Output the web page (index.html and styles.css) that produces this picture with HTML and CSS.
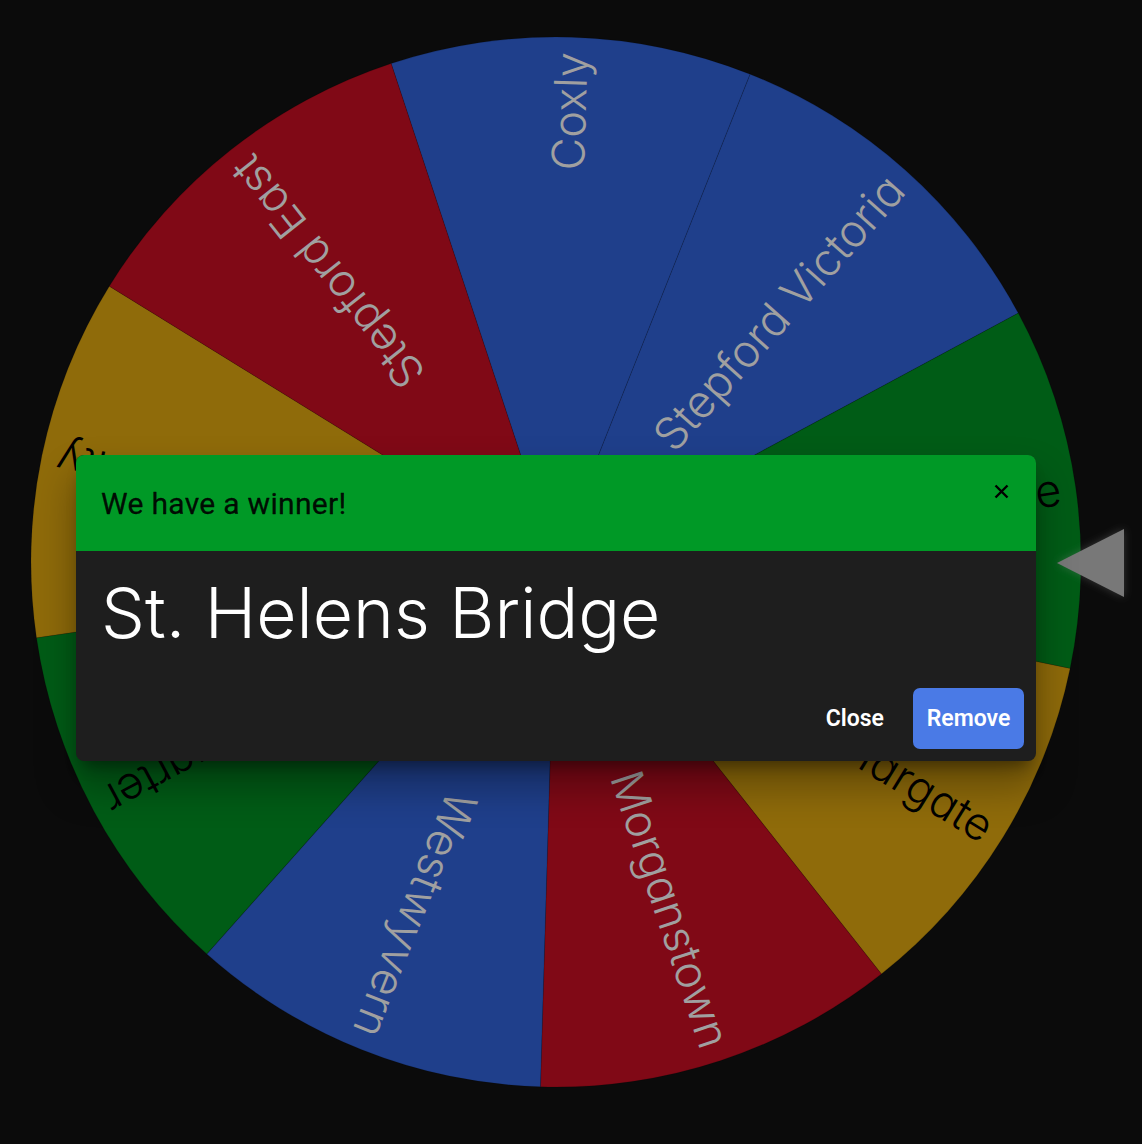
FILE: index.html
```html
<!DOCTYPE html>
<html lang="en">
<head>
<meta charset="utf-8">
<title>Wheel – winner</title>
<link rel="stylesheet" href="styles.css">
</head>
<body>
<div class="stage">
  <svg class="wheel" width="1142" height="1144" viewBox="0 0 1142 1144" xmlns="http://www.w3.org/2000/svg">
    <defs>
      <path id="wedge" d="M556 562 L1049.34 382.44 A525 525 0 0 1 1049.34 741.56 Z"/>
      <filter id="glow" x="-50%" y="-50%" width="200%" height="200%">
        <feDropShadow dx="0" dy="0" stdDeviation="4" flood-color="#8a8a8a" flood-opacity="0.35"/>
      </filter>
    </defs>
    <g class="segments">
      <use href="#wedge" class="seg blue" transform="rotate(271.7 556 562)"/>
      <use href="#wedge" class="seg blue" transform="rotate(311.7 556 562)"/>
      <use href="#wedge" class="seg green" transform="rotate(351.7 556 562)"/>
      <use href="#wedge" class="seg gold" transform="rotate(31.7 556 562)"/>
      <use href="#wedge" class="seg red" transform="rotate(71.7 556 562)"/>
      <use href="#wedge" class="seg blue" transform="rotate(111.7 556 562)"/>
      <use href="#wedge" class="seg green" transform="rotate(151.7 556 562)"/>
      <use href="#wedge" class="seg gold" transform="rotate(191.7 556 562)"/>
      <use href="#wedge" class="seg red" transform="rotate(231.7 556 562)"/>
    </g>
    <g class="labels">
      <text class="seg-text light" x="1066" y="562" transform="rotate(271.7 556 562)">Coxly</text>
      <text class="seg-text light" x="1066" y="562" transform="rotate(311.7 556 562)">Stepford Victoria</text>
      <text class="seg-text dark" x="1066" y="562" transform="rotate(351.7 556 562)">St. Helens Bridge</text>
      <text class="seg-text dark" x="1066" y="562" transform="rotate(31.7 556 562)">Hampton Hargate</text>
      <text class="seg-text light" x="1066" y="562" transform="rotate(71.7 556 562)">Morganstown</text>
      <text class="seg-text light" x="1066" y="562" transform="rotate(111.7 556 562)">Westwyvern</text>
      <text class="seg-text dark" x="1066" y="562" transform="rotate(151.7 556 562)">Financial Quarter</text>
      <text class="seg-text dark" x="1066" y="562" transform="rotate(191.7 556 562)">Leighton City</text>
      <text class="seg-text light" x="1066" y="562" transform="rotate(231.7 556 562)">Stepford East</text>
    </g>
    <polygon class="pointer" points="1057,563 1124,529 1124,597" filter="url(#glow)"/>
  </svg>

  <div class="dialog">
    <div class="dialog-header">
      <span class="dialog-title">We have a winner!</span>
      <button class="dialog-x" aria-label="Close">
        <svg width="15" height="15" viewBox="0 0 15 15"><path d="M1.5 1.5 L13.5 13.5 M13.5 1.5 L1.5 13.5" stroke="#000" stroke-width="2.4" fill="none"/></svg>
      </button>
    </div>
    <div class="dialog-body">
      <div class="winner">St. Helens Bridge</div>
    </div>
    <div class="dialog-actions">
      <button class="btn btn-text">Close</button>
      <button class="btn btn-primary">Remove</button>
    </div>
  </div>
</div>
</body>
</html>
```

FILE: styles.css
```css
html, body {
  margin: 0;
  padding: 0;
  background: #0b0b0b;
}

.stage {
  position: relative;
  width: 1142px;
  height: 1144px;
  overflow: hidden;
  background: #0b0b0b;
}

.wheel {
  display: block;
}

.seg {
  stroke: rgba(0, 0, 0, 0.12);
  stroke-width: 1;
}
.seg.blue  { fill: #1f3f8b; }
.seg.red   { fill: #800916; }
.seg.gold  { fill: #8f6b0a; }
.seg.green { fill: #005c16; }

.seg-text {
  font-family: "Inter", "Lato", sans-serif;
  font-weight: 300;
  font-size: 45px;
  font-feature-settings: "cv11" 1;
  text-anchor: end;
  dominant-baseline: central;
}
.seg-text.light { fill: #a0a0a0; }
.seg-text.dark  { fill: #000000; }

.pointer {
  fill: #787878;
}

.dialog {
  position: absolute;
  left: 76px;
  top: 455px;
  width: 960px;
  background: #1e1e1e;
  border-radius: 8px;
  overflow: hidden;
  box-shadow: 0 11px 15px -7px rgba(0,0,0,0.4), 0 24px 38px 3px rgba(0,0,0,0.3);
  display: flex;
  flex-direction: column;
}

.dialog-header {
  height: 96px;
  background: #009926;
  display: flex;
  align-items: center;
  padding: 0 15px 0 25px;
  box-sizing: border-box;
}

.dialog-title {
  flex: 1;
  font-family: "Roboto", "Liberation Sans", sans-serif;
  font-weight: 400;
  font-size: 30px;
  color: rgba(0, 0, 0, 0.92);
  letter-spacing: 0.3px;
  -webkit-text-stroke: 0.3px rgba(0, 0, 0, 0.9);
}

.dialog-x {
  align-self: flex-start;
  margin-top: 16px;
  width: 40px;
  height: 40px;
  border: 0;
  padding: 0;
  background: transparent;
  display: flex;
  align-items: center;
  justify-content: center;
}

.dialog-body {
  padding: 28px 25px 0;
}

.winner {
  font-family: "Inter", "Lato", sans-serif;
  font-weight: 300;
  font-size: 69.5px;
  line-height: 68px;
  color: #ffffff;
  font-feature-settings: "cv11" 1;
}

.dialog-actions {
  display: flex;
  justify-content: flex-end;
  align-items: center;
  gap: 13px;
  padding: 41px 12px 12px;
}

.btn {
  height: 61px;
  border: 0;
  border-radius: 7px;
  font-family: "Roboto", "Liberation Sans", sans-serif;
  font-weight: 600;
  font-size: 23px;
  color: #ffffff;
  background: transparent;
  cursor: pointer;
}

.btn-text {
  padding: 0 16px;
}

.btn-primary {
  padding: 0 13px;
  width: 111px;
  background: #4a7ae6;
}
```
